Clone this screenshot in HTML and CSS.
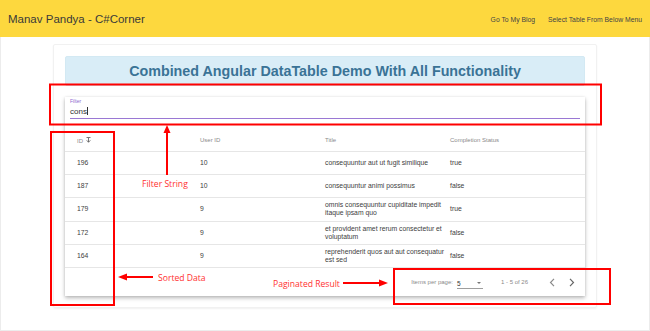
FILE: index.html
```html
<!DOCTYPE html>
<html lang="en">
<head>
    <meta charset="UTF-8">
    <meta name="viewport" content="width=device-width, initial-scale=1.0">
    <title>Combined Angular DataTable Demo</title>
    <link rel="stylesheet" href="styles.css">
</head>
<body>

    <!-- top toolbar -->
    <header class="topbar">
        <span class="brand">Manav Pandya - C#Corner</span>
        <nav class="links">
            <a href="#">Go To My Blog</a>
            <a href="#">Select Table From Below Menu</a>
        </nav>
    </header>

    <main class="page">
        <section class="panel">
            <div class="banner">
                <h1>Combined Angular DataTable Demo With All Functionality</h1>
            </div>

            <div class="table-card">
                <div class="filter">
                    <label class="filter-label">Filter</label>
                    <div class="filter-value">cons<span class="caret"></span></div>
                </div>

                <table class="data-table">
                    <colgroup>
                        <col class="c-id">
                        <col class="c-user">
                        <col class="c-title">
                        <col class="c-status">
                    </colgroup>
                    <thead>
                        <tr>
                            <th>ID <svg class="sort-arrow" width="5" height="6" viewBox="0 0 5 6"><line x1="0.5" y1="0.5" x2="4.5" y2="0.5" stroke="#555" stroke-width="0.8"/><line x1="2.5" y1="1" x2="2.5" y2="5" stroke="#555" stroke-width="0.8"/><polyline points="0.7,3.3 2.5,5.3 4.3,3.3" fill="none" stroke="#555" stroke-width="0.8"/></svg></th>
                            <th>User ID</th>
                            <th>Title</th>
                            <th>Completion Status</th>
                        </tr>
                    </thead>
                    <tbody>
                        <tr><td>196</td><td>10</td><td>consequuntur aut ut fugit similique</td><td>true</td></tr>
                        <tr><td>187</td><td>10</td><td>consequuntur animi possimus</td><td>false</td></tr>
                        <tr><td>179</td><td>9</td><td>omnis consequuntur cupiditate impedit itaque ipsam quo</td><td>true</td></tr>
                        <tr><td>172</td><td>9</td><td>et provident amet rerum consectetur et voluptatum</td><td>false</td></tr>
                        <tr><td>164</td><td>9</td><td>reprehenderit quos aut aut consequatur est sed</td><td>false</td></tr>
                    </tbody>
                </table>

                <div class="paginator">
                    <span class="page-label">Items per page:</span>
                    <div class="page-size">
                        <span>5</span>
                        <span class="drop"></span>
                    </div>
                    <span class="range">1 - 5 of 26</span>
                    <button class="nav-btn">
                        <svg width="6" height="9" viewBox="0 0 6 9"><polyline points="5,0.8 1.5,4.5 5,8.2" fill="none" stroke="#8a8a8a" stroke-width="1.2"/></svg>
                    </button>
                    <button class="nav-btn">
                        <svg width="6" height="9" viewBox="0 0 6 9"><polyline points="1,0.8 4.5,4.5 1,8.2" fill="none" stroke="#666" stroke-width="1.2"/></svg>
                    </button>
                </div>
            </div>
        </section>
    </main>

    <!-- red annotations drawn over the screenshot -->
    <svg class="notes" width="650" height="331" viewBox="0 0 650 331">
        <g fill="none" stroke="#ff0000" stroke-width="2">
            <rect x="50" y="84.5" width="551" height="40"/>
            <rect x="51" y="132" width="63" height="173"/>
            <rect x="394" y="269" width="216" height="35"/>
        </g>
        <g stroke="#ff0000" stroke-width="2">
            <line x1="167" y1="132" x2="167" y2="175"/>
            <line x1="126" y1="277" x2="153" y2="277"/>
            <line x1="343" y1="283" x2="379" y2="283"/>
        </g>
        <g fill="#ff0000">
            <polygon points="167,125 163.5,133 170.5,133"/>
            <polygon points="118,277 127,273.5 127,280.5"/>
            <polygon points="388,283 379,279.5 379,286.5"/>
        </g>
        <g class="note-text">
            <text x="142" y="186.5">Filter String</text>
            <text x="158" y="280.5">Sorted Data</text>
            <text x="273" y="286.5">Paginated Result</text>
        </g>
    </svg>

</body>
</html>
```

FILE: styles.css
```css
* {
    box-sizing: border-box;
}

body {
    margin: 0;
    width: 650px;
    height: 331px;
    overflow: hidden;
    position: relative;
    font-family: "Liberation Sans", Arial, sans-serif;
    background: #fff;
}

/* toolbar */
.topbar {
    height: 37px;
    background-color: #fdd83e;
    display: flex;
    align-items: center;
    justify-content: space-between;
    padding: 0 8px 0 8px;
}

.brand {
    font-size: 11.5px;
    color: #3a3a3a;
}

.links {
    display: flex;
    gap: 13px;
    margin-top: 1px;
}

.links a {
    font-size: 6.8px;
    color: #444;
    text-decoration: none;
}

/* page area under the toolbar */
.page {
    height: 294px;
    border: 1px solid #ececec;
    border-top: none;
    padding: 7px 0 0 52px;
}

.panel {
    width: 544px;
    height: 264px;
    border: 1px solid #f1f1f1;
    border-radius: 2px;
    box-shadow: 0 1px 2px rgba(0, 0, 0, 0.06);
    padding: 11px 11px 0 11px;
}

.banner {
    height: 30px;
    background-color: #d9edf7;
    border: 1px solid #d3e9f3;
    border-radius: 2px;
    display: flex;
    align-items: center;
    justify-content: center;
    margin-bottom: 11px;
}

.banner h1 {
    margin: 0;
    font-size: 14.3px;
    font-weight: bold;
    color: #3a7396;
}

/* material style table card */
.table-card {
    height: 199px;
    background: #fff;
    box-shadow: 0 2px 4px rgba(0, 0, 0, 0.28), 0 0 2px rgba(0, 0, 0, 0.08);
}

.filter {
    height: 29px;
    padding: 1px 5px 0 5px;
}

.filter-label {
    display: block;
    font-size: 5px;
    color: #8e6ad0;
    height: 7px;
    line-height: 7px;
}

.filter-value {
    font-size: 8px;
    color: #333;
    height: 13.5px;
    line-height: 13px;
    border-bottom: 1.5px solid #9a78d4;
}

.caret {
    display: inline-block;
    width: 1px;
    height: 8px;
    background: #333;
    vertical-align: -1px;
    margin-left: 0.5px;
}

.data-table {
    width: 520px;
    border-collapse: collapse;
    table-layout: fixed;
}

.c-id { width: 135px; }
.c-user { width: 125px; }
.c-title { width: 125px; }
.c-status { width: 135px; }

.data-table th {
    height: 25px;
    text-align: left;
    font-weight: normal;
    font-size: 6px;
    color: #8a8a8a;
    padding: 3px 0 0 0;
    border-bottom: 1px solid #e6e6e6;
}

.data-table td {
    height: 23.4px;
    font-size: 6.8px;
    color: #404040;
    padding: 0 1px 0 0;
    line-height: 8px;
    border-bottom: 1px solid #e6e6e6;
}

.data-table th:first-child,
.data-table td:first-child {
    padding-left: 12px;
}

.sort-arrow {
    margin-left: 1px;
    vertical-align: -0.5px;
}

/* paginator */
.paginator {
    height: 28px;
    display: flex;
    align-items: center;
    justify-content: flex-end;
    padding-right: 3px;
    font-size: 6px;
    color: #8a8a8a;
}

.page-label {
    margin-right: 4px;
}

.page-size {
    width: 26px;
    height: 11px;
    display: flex;
    align-items: center;
    justify-content: space-between;
    border-bottom: 1px solid #9e9e9e;
    color: #333;
    font-size: 6.5px;
    padding-right: 2px;
    margin-top: 3px;
}

.drop {
    width: 0;
    height: 0;
    border-left: 2.5px solid transparent;
    border-right: 2.5px solid transparent;
    border-top: 2.5px solid #777;
}

.range {
    margin-left: 18px;
    margin-right: 14px;
}

.nav-btn {
    width: 20px;
    height: 20px;
    border: none;
    background: none;
    padding: 0;
    display: flex;
    align-items: center;
    justify-content: center;
}

/* annotation layer */
.notes {
    position: absolute;
    top: 0;
    left: 0;
    pointer-events: none;
}

.note-text text {
    font-family: "Open Sans", sans-serif;
    font-size: 8.6px;
    fill: #ff3030;
}
```
